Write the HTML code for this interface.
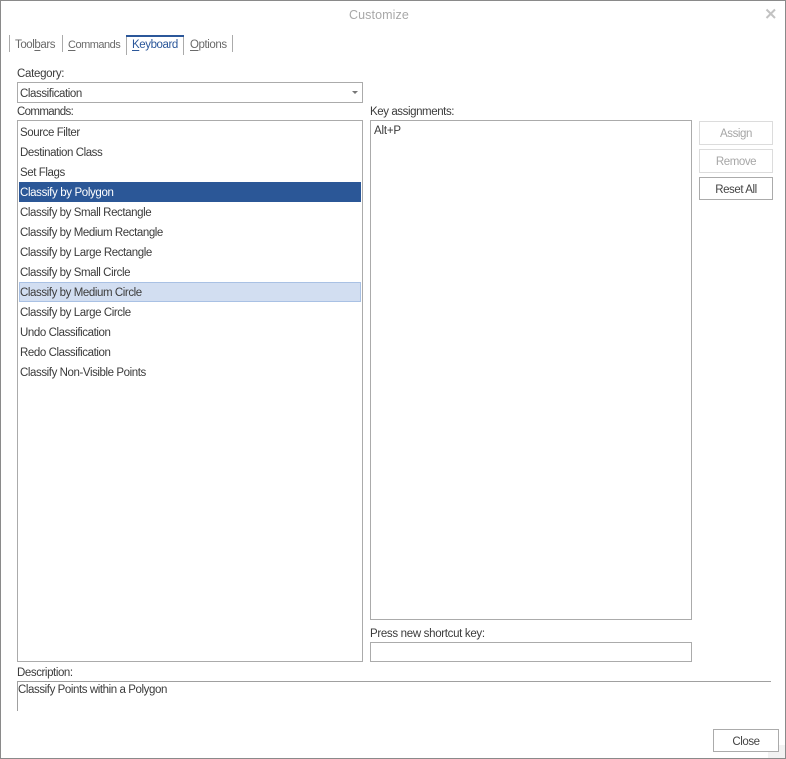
<!DOCTYPE html>
<html><head><meta charset="utf-8"><style>
html,body{margin:0;padding:0;width:786px;height:759px;overflow:hidden;background:#fff}
body{font:11.5px/16px "Liberation Sans",sans-serif;color:#3b3b3b;position:relative}
.a{position:absolute;box-sizing:border-box;white-space:nowrap}
.t{letter-spacing:-.42px}
.box{border:1px solid #ababab;background:#fff}
.btn{border:1px solid #ababab;text-align:center;background:#fff;color:#444}
.dis{border-color:#dcdcdc;color:#a6a6a6}
.v{width:1px;background:#ababab;top:35px;height:17px}
u{text-decoration-thickness:1px;text-underline-offset:2px}
</style></head><body>
<div class="a" style="left:0;top:0;width:786px;height:759px;border:1px solid #8a8a8a"></div>
<div class="a" style="left:768px;top:745px;width:17px;height:13px;background:#f2f2f2"></div>
<div class="a" style="left:349px;top:7px;font-size:12.5px;letter-spacing:.1px;color:#a8a8a8">Customize</div>
<svg class="a" style="left:765px;top:8px" width="12" height="12"><path d="M1.5 1.5L10 10M10 1.5L1.5 10" stroke="#c2c2c2" stroke-width="2"/></svg>

<div class="a v" style="left:9px"></div><div class="a v" style="left:62px"></div>
<div class="a v" style="left:126px;height:20px"></div><div class="a v" style="left:183px;height:20px"></div><div class="a v" style="left:232px"></div>
<div class="a" style="left:126px;top:35px;width:58px;height:2px;background:#2b579a"></div>
<div class="a t" style="left:15px;top:37px;color:#6a6a6a">Tool<u>b</u>ars</div>
<div class="a" style="left:68px;top:37px;color:#6a6a6a;font-size:11px;letter-spacing:-.5px"><u>C</u>ommands</div>
<div class="a t" style="left:132px;top:37px;color:#2b579a"><u>K</u>eyboard</div>
<div class="a t" style="left:190px;top:37px;color:#6a6a6a"><u>O</u>ptions</div>

<div class="a t" style="left:17px;top:66px;letter-spacing:-.3px">Category:</div>
<div class="a box" style="left:17px;top:82px;width:346px;height:21px"></div>
<div class="a t" style="left:20px;top:86px">Classification</div>
<div class="a" style="left:352px;top:91px;width:0;height:0;border:3px solid transparent;border-top:3px solid #777;border-bottom:0"></div>

<div class="a t" style="left:17px;top:104px;letter-spacing:-.65px">Commands:</div>
<div class="a box" style="left:17px;top:120px;width:346px;height:542px"></div>
<div class="a" style="left:19px;top:182px;width:342px;height:20px;background:#2b5797"></div>
<div class="a" style="left:19px;top:282px;width:342px;height:20px;background:#d2deF1;border:1px solid #a9c1e4"></div>
<div class="a t" style="left:20px;top:125px">Source Filter</div>
<div class="a t" style="left:20px;top:145px">Destination Class</div>
<div class="a t" style="left:20px;top:165px">Set Flags</div>
<div class="a t" style="left:20px;top:185px;color:#fff;letter-spacing:-.36px">Classify by Polygon</div>
<div class="a t" style="left:20px;top:205px">Classify by Small Rectangle</div>
<div class="a t" style="left:20px;top:225px">Classify by Medium Rectangle</div>
<div class="a t" style="left:20px;top:245px">Classify by Large Rectangle</div>
<div class="a t" style="left:20px;top:265px">Classify by Small Circle</div>
<div class="a t" style="left:20px;top:285px">Classify by Medium Circle</div>
<div class="a t" style="left:20px;top:305px">Classify by Large Circle</div>
<div class="a t" style="left:20px;top:325px">Undo Classification</div>
<div class="a t" style="left:20px;top:345px">Redo Classification</div>
<div class="a t" style="left:20px;top:365px">Classify Non-Visible Points</div>

<div class="a t" style="left:370px;top:104px">Key assignments:</div>
<div class="a box" style="left:370px;top:120px;width:322px;height:500px"></div>
<div class="a" style="left:374px;top:123px;letter-spacing:-.2px">Alt+P</div>

<div class="a btn dis t" style="left:699px;top:121px;width:74px;height:24px;line-height:24px">Assign</div>
<div class="a btn dis t" style="left:699px;top:149px;width:74px;height:24px;line-height:24px">Remove</div>
<div class="a btn t" style="left:699px;top:177px;width:74px;height:23px;line-height:24px">Reset All</div>

<div class="a t" style="left:370px;top:626px;letter-spacing:-.32px">Press new shortcut key:</div>
<div class="a box" style="left:370px;top:642px;width:322px;height:20px"></div>

<div class="a t" style="left:17px;top:665px">Description:</div>
<div class="a" style="left:17px;top:681px;width:754px;height:1px;background:#a0a0a0"></div>
<div class="a" style="left:17px;top:681px;width:1px;height:30px;background:#a0a0a0"></div>
<div class="a t" style="left:18px;top:682px">Classify Points within a Polygon</div>

<div class="a btn t" style="left:713px;top:729px;width:66px;height:23px;line-height:24px">Close</div>
</body></html>
